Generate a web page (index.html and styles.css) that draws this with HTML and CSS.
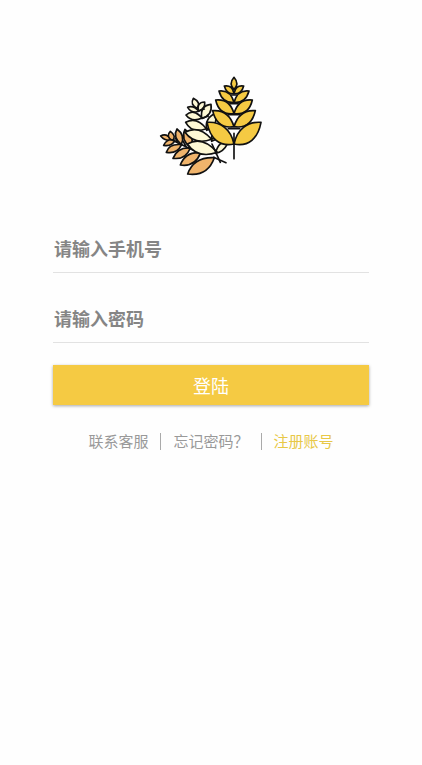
FILE: index.html
```html
<!DOCTYPE html>
<html lang="zh-CN">
<head>
<meta charset="utf-8">
<meta name="viewport" content="width=device-width, initial-scale=1">
<title>登陆</title>
<link rel="stylesheet" href="styles.css">
</head>
<body>
<main class="login">
  <svg class="logo" viewBox="2 0 360 330" aria-hidden="true">
    <g class="leaf orange">
      <path d="M31 198Q49 188 64 210Q44 214 31 198Z"/>
      <path d="M60 184Q45 198 66 214Q80 198 60 184Z"/>
      <path d="M80 177Q66 200 93 224Q106 196 80 177Z"/>
      <path d="M104 178Q90 208 120 232Q137 204 104 178Z"/>
      <path d="M40 226Q50 204 74 211Q65 230 40 226Z"/>
      <path d="M48 247Q56 220 94 224Q80 253 48 247Z"/>
      <path d="M68 265Q82 231 120 234Q106 270 68 265Z"/>
      <path d="M90 285Q105 244 151 248Q134 292 90 285Z"/>
      <path d="M112 312Q130 260 192 263Q172 320 112 312Z"/>
    </g>
    <path class="line" d="M76 205L84 221M98 213L108 231M60 208L140 246M190 262L227 278"/>
    <g class="leaf cream">
      <path d="M129 85Q118 105 141 115Q153 97 129 85Z"/>
      <path d="M163 96Q138 97 144 123Q166 118 163 96Z"/>
      <path d="M182 103Q149 106 154 145Q187 136 182 103Z"/>
      <path d="M196 130Q162 144 169 181Q203 169 196 130Z"/>
      <path d="M218 167Q180 174 184 214Q220 202 218 167Z"/>
      <path d="M232 220Q207 208 195 250Q219 247 232 220Z"/>
      <path d="M112 112Q129 105 146 124Q124 132 112 112Z"/>
      <path d="M107 135Q129 115 155 144Q124 158 107 135Z"/>
      <path d="M106 157Q139 139 168 176Q125 192 106 157Z"/>
      <path d="M104 187Q145 164 184 208Q132 226 104 187Z"/>
      <path d="M111 222Q156 196 201 247Q143 268 111 222Z"/>
    </g>
    <path class="line" d="M150 121L162 117M157 145L174 138M168 177L180 172M183 207L195 204M185 222L210 277"/>
    <g class="leaf yellow">
      <path d="M251 22Q234 42 251 59Q268 42 251 22Z"/>
      <path d="M222 48Q247 44 251 71Q229 74 222 48Z"/>
      <path d="M280 48Q255 44 251 71Q273 74 280 48Z"/>
      <path d="M206 63C228 60 245 73 251 98C228 99 212 85 206 63Z"/>
      <path d="M296 63C274 60 257 73 251 98C274 99 290 85 296 63Z"/>
      <path d="M196 90C224 87 243 102 251 131C219 135 202 116 196 90Z"/>
      <path d="M306 90C278 87 259 102 251 131C283 135 300 116 306 90Z"/>
      <path d="M187 122C220 119 241 137 251 170C213 176 194 153 187 122Z"/>
      <path d="M315 122C282 119 261 137 251 170C289 176 308 153 315 122Z"/>
      <path d="M170 157C211 154 242 178 251 222C207 231 179 205 170 157Z"/>
      <path d="M332 157C291 154 260 178 251 222C295 231 323 205 332 157Z"/>
    </g>
    <path class="line" d="M243 75H259M239 101H263M235 134H267M234 176H268M251 190V266"/>
  </svg>

  <form class="form">
    <input class="field" type="tel" aria-label="手机号" placeholder="请输入手机号">
    <input class="field" type="password" aria-label="密码" placeholder="请输入密码">
    <button class="submit" type="submit">登陆</button>
  </form>

  <nav class="links">
    <a href="#service">联系客服</a>
    <span class="divider"></span>
    <a href="#forgot">忘记密码？</a>
    <span class="divider"></span>
    <a class="register" href="#register">注册账号</a>
  </nav>
</main>
</body>
</html>
```
FILE: styles.css
```css
* {
  box-sizing: border-box;
}

body {
  margin: 0;
  background: #fefefe;
  font-family: "Noto Sans CJK SC", sans-serif;
}

.login {
  display: flex;
  flex-direction: column;
  align-items: center;
  padding: 70px 53px 40px;
}

.logo {
  width: 120px;
  height: 110px;
}

.leaf {
  stroke: #111;
  stroke-width: 5;
  stroke-linejoin: round;
}

.orange {
  fill: #f0b46c;
}

.cream {
  fill: #fdf8d5;
}

.yellow {
  fill: #f5ca43;
}

.line {
  fill: none;
  stroke: #111;
  stroke-width: 5;
  stroke-linecap: round;
}

.form {
  display: flex;
  flex-direction: column;
  align-self: stretch;
  margin-top: 45px;
}

.field {
  width: 100%;
  height: 48px;
  margin-bottom: 22px;
  padding: 0 1px 2px;
  border: 0;
  border-bottom: 1px solid #e2e2e2;
  border-radius: 0;
  outline: 0;
  background: transparent;
  color: #333;
  font-family: inherit;
  font-size: 18px;
  font-weight: 700;
}

.field::placeholder {
  color: #858585;
  opacity: 1;
}

.submit {
  height: 40px;
  padding: 0;
  border: 0;
  border-radius: 0;
  background: #f5ca43;
  box-shadow: 0 1px 3px rgba(0, 0, 0, 0.35);
  color: #fff;
  font-family: inherit;
  font-size: 18px;
  line-height: 40px;
}

.links {
  display: flex;
  align-items: center;
  gap: 12px;
  margin-top: 25px;
  font-size: 15px;
  line-height: 22px;
  white-space: nowrap;
}

.links a {
  color: #999;
  text-decoration: none;
}

.links .register {
  color: #e8c847;
}

.divider {
  width: 1px;
  height: 17px;
  background: #aaa;
}
```
